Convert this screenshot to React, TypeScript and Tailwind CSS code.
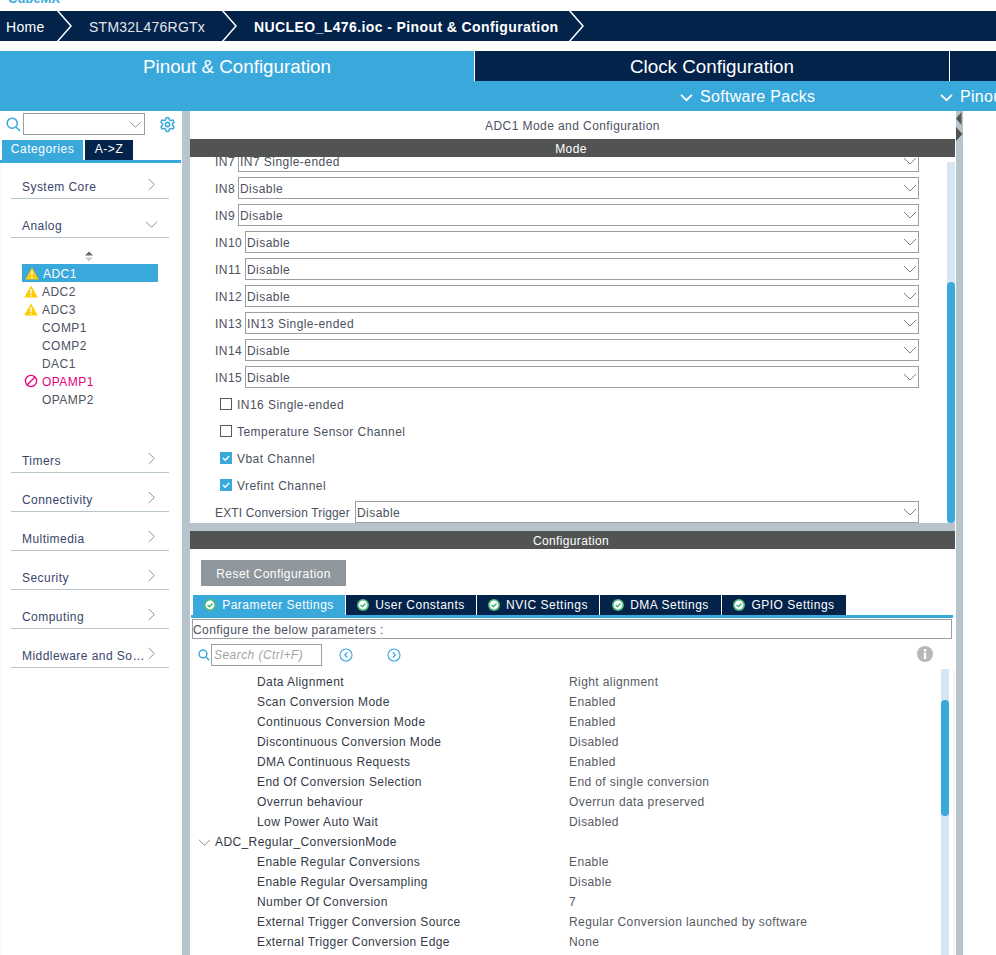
import React from "react";

const FONT = "font-['Liberation_Sans',Arial,sans-serif]";

function Chev({ dir = "down", className = "" }: { dir?: "down" | "right"; className?: string }) {
  return (
    <svg viewBox="0 0 14 14" className={className} fill="none" stroke="currentColor" strokeWidth="1">
      {dir === "down" ? <path d="M1 4l6 6 6-6" /> : <path d="M4 1l6 6-6 6" />}
    </svg>
  );
}

function Crumb({ w = 16 }: { w?: number }) {
  return (
    <svg viewBox="0 0 16 30" width={w} height={30} className="shrink-0" fill="none" stroke="#ffffff" strokeWidth="1.5">
      <path d="M1 -1L15 15L1 31" />
    </svg>
  );
}

function SideHead({ label, open = false }: { label: string; open?: boolean }) {
  return (
    <div className="ml-[11px] mr-[13px] mb-[16px] h-[23px] border-b border-[#b8c4cc] relative flex items-start pl-[11px] text-[12px] tracking-[0.45px] leading-[22px] text-[#39456a] whitespace-nowrap">
      <span>{label}</span>
      {open ? (
        <Chev className="absolute right-[11px] top-[3px] w-[13px] h-[13px] text-[#80888e]" />
      ) : (
        <Chev dir="right" className="absolute right-[11px] top-[2px] w-[13px] h-[13px] text-[#80888e]" />
      )}
    </div>
  );
}

function Warn() {
  return (
    <svg viewBox="0 0 14 13" className="w-[14px] h-[13px] shrink-0">
      <path d="M7 0.5L13.8 12.5H0.2Z" fill="#ffcb05" />
      <rect x="6.3" y="4" width="1.4" height="5" fill="#fff" />
      <rect x="6.3" y="10" width="1.4" height="1.4" fill="#fff" />
    </svg>
  );
}

function Ban() {
  return (
    <svg viewBox="0 0 14 14" className="w-[14px] h-[14px] shrink-0" fill="none" stroke="#e6007e" strokeWidth="1.3">
      <circle cx="7" cy="7" r="5.6" />
      <path d="M3 11L11 3" />
    </svg>
  );
}

function PeriphRow({ label, icon, active, pink }: { label: string; icon?: "w" | "b"; active?: boolean; pink?: boolean }) {
  return (
    <div className={`h-[18px] flex items-center text-[12px] tracking-[0.45px] ${active ? "bg-[#39a9dc] text-white pl-[3px]" : pink ? "text-[#e6007e] pl-[2px]" : "text-[#4c5160] pl-[2px]"}`}>
      <span className="w-[18px] flex items-center">{icon === "w" && <Warn />}{icon === "b" && <Ban />}</span>
      <span className="pt-[2px]">{label}</span>
    </div>
  );
}

function SelectRow({ label, value, boxLeft, tight }: { label: string; value: string; boxLeft: number; tight?: boolean }) {
  return (
    <div className="h-[27px] flex items-center pl-[25px] pr-[36px] text-[12px] tracking-[0.45px] text-[#4c5160]">
      <span className={`shrink-0 whitespace-nowrap pt-[2px] ${tight ? "tracking-[0.15px]" : ""}`} style={{ width: boxLeft - 215 }}>{label}</span>
      <div className="flex-1 h-[22px] border border-[#999fa3] flex items-center justify-between pl-[1px] pr-[1px]">
        <span className="pt-[2px]">{value}</span>
        <Chev className="w-[14px] h-[14px] text-[#7d8488]" />
      </div>
    </div>
  );
}

function CheckRow({ label, checked }: { label: string; checked?: boolean }) {
  return (
    <div className="h-[27px] flex items-center pl-[30px] gap-[5px] text-[12px] tracking-[0.45px] text-[#4c5160]">
      {checked ? (
        <span className="w-[12px] h-[12px] bg-[#39a9dc] flex items-center justify-center">
          <svg viewBox="0 0 12 12" className="w-[12px] h-[12px]" fill="none" stroke="#fff" strokeWidth="1.4"><path d="M3 6l2.2 2.2L9.2 4" /></svg>
        </span>
      ) : (
        <span className="w-[12px] h-[12px] border border-[#555a5e]" />
      )}
      <span className="pt-[2px]">{label}</span>
    </div>
  );
}

function TabIcon() {
  return (
    <svg viewBox="0 0 12 12" className="w-[12px] h-[12px] shrink-0">
      <circle cx="6" cy="6" r="6" fill="#4dbb7c" />
      <circle cx="6" cy="6" r="4.4" fill="#ffffff" />
      <path d="M3.6 6l1.8 1.8L8.5 4.6" fill="none" stroke="#3cb371" strokeWidth="1.4" />
    </svg>
  );
}

function CfgTab({ label, w, active }: { label: string; w: number; active?: boolean }) {
  return (
    <div style={{ width: w }} className={`h-[20px] flex items-center justify-center gap-[6px] text-white text-[12px] tracking-[0.5px] mr-[1px] ${active ? "bg-[#39a9dc]" : "bg-[#03234b]"}`}>
      <TabIcon />
      <span>{label}</span>
    </div>
  );
}

function Param({ k, v }: { k: string; v: string }) {
  return (
    <div className="h-[20px] flex items-center text-[12px] tracking-[0.4px]">
      <span className="w-[379px] pl-[67px] text-[#333a48]">{k}</span>
      <span className="text-[#55585f]">{v}</span>
    </div>
  );
}

export default function App() {
  const params1: [string, string][] = [
    ["Data Alignment", "Right alignment"],
    ["Scan Conversion Mode", "Enabled"],
    ["Continuous Conversion Mode", "Enabled"],
    ["Discontinuous Conversion Mode", "Disabled"],
    ["DMA Continuous Requests", "Enabled"],
    ["End Of Conversion Selection", "End of single conversion"],
    ["Overrun behaviour", "Overrun data preserved"],
    ["Low Power Auto Wait", "Disabled"],
  ];
  const params2: [string, string][] = [
    ["Enable Regular Conversions", "Enable"],
    ["Enable Regular Oversampling", "Disable"],
    ["Number Of Conversion", "7"],
    ["External Trigger Conversion Source", "Regular Conversion launched by software"],
    ["External Trigger Conversion Edge", "None"],
  ];
  return (
    <div className={`${FONT} w-[996px] h-[955px] overflow-hidden bg-white flex flex-col`}>
      {/* cut logo */}
      <div className="h-[11px] overflow-hidden relative">
        <span className="absolute left-[8px] top-[-9px] text-[13px] leading-[16px] font-bold text-[#39a9dc]">CubeMX</span>
      </div>

      {/* breadcrumb */}
      <div className="h-[30px] bg-[#03234b] flex items-center text-white text-[14px] leading-[20px] overflow-hidden">
        <span className="pl-[6px] pt-[2px] w-[56px] tracking-[0.3px]">Home</span>
        <Crumb />
        <span className="pl-[17px] pt-[2px] w-[149px] text-[#e2e6ec] tracking-[0.25px]">STM32L476RGTx</span>
        <Crumb />
        <span className="pl-[17px] pt-[2px] w-[331px] font-bold tracking-[0.4px] whitespace-nowrap">NUCLEO_L476.ioc - Pinout &amp; Configuration</span>
        <Crumb />
      </div>

      <div className="h-[10px]" />

      {/* main tabs */}
      <div className="h-[30px] flex text-[18.8px] text-white">
        <div className="w-[474px] pt-[2px] bg-[#39a9dc] flex items-center justify-center">Pinout &amp; Configuration</div>
        <div className="w-[1px]" />
        <div className="w-[474px] pt-[2px] bg-[#03234b] flex items-center justify-center">Clock Configuration</div>
        <div className="w-[1px]" />
        <div className="flex-1 bg-[#03234b]" />
      </div>
      <div className="h-[30px] pt-[2px] bg-[#39a9dc] relative flex items-center text-white text-[16px] tracking-[0.3px] whitespace-nowrap overflow-hidden">
        <div className="shrink-0 pl-[680px] w-[940px] flex items-center gap-[7px]">
          <svg viewBox="0 0 14 10" className="w-[13px] h-[9px]" fill="none" stroke="#fff" strokeWidth="2"><path d="M1 2l6 6 6-6" /></svg>
          <span>Software Packs</span>
        </div>
        <div className="shrink-0 flex items-center gap-[7px]">
          <svg viewBox="0 0 14 10" className="w-[13px] h-[9px]" fill="none" stroke="#fff" strokeWidth="2"><path d="M1 2l6 6 6-6" /></svg>
          <span>Pinout</span>
        </div>
      </div>

      {/* body */}
      <div className="flex-1 flex min-h-0">
        {/* sidebar */}
        <aside className="w-[182px] shrink-0 flex flex-col">
          <div className="h-[29px] flex items-center pb-[3px] pl-[6px]">
            <svg viewBox="0 0 16 16" className="w-[15px] h-[15px]" fill="none" stroke="#39a9dc" strokeWidth="1.6">
              <circle cx="6.6" cy="6.6" r="5.4" /><path d="M10.6 10.6L15 15" />
            </svg>
            <div className="ml-[2px] w-[122px] h-[22px] border border-[#999fa3] flex items-center justify-end pr-[2px]">
              <Chev className="w-[13px] h-[13px] text-[#7d8488]" />
            </div>
            <svg viewBox="0 0 24 24" className="ml-[14px] w-[17px] h-[17px]" fill="none" stroke="#39a9dc" strokeWidth="2.2" strokeLinecap="round" strokeLinejoin="round">
              <path d="M12.22 2h-.44a2 2 0 0 0-2 2v.18a2 2 0 0 1-1 1.73l-.43.25a2 2 0 0 1-2 0l-.15-.08a2 2 0 0 0-2.73.73l-.22.38a2 2 0 0 0 .73 2.73l.15.1a2 2 0 0 1 1 1.72v.51a2 2 0 0 1-1 1.74l-.15.09a2 2 0 0 0-.73 2.73l.22.38a2 2 0 0 0 2.73.73l.15-.08a2 2 0 0 1 2 0l.43.25a2 2 0 0 1 1 1.73V20a2 2 0 0 0 2 2h.44a2 2 0 0 0 2-2v-.18a2 2 0 0 1 1-1.73l.43-.25a2 2 0 0 1 2 0l.15.08a2 2 0 0 0 2.73-.73l.22-.39a2 2 0 0 0-.73-2.73l-.15-.08a2 2 0 0 1-1-1.74v-.5a2 2 0 0 1 1-1.74l.15-.09a2 2 0 0 0 .73-2.73l-.22-.38a2 2 0 0 0-2.73-.73l-.15.08a2 2 0 0 1-2 0l-.43-.25a2 2 0 0 1-1-1.73V4a2 2 0 0 0-2-2z" />
              <circle cx="12" cy="12" r="3" />
            </svg>
          </div>
          <div className="h-[20px] flex pl-[2px] gap-[2px] text-[12px] tracking-[0.55px] text-white">
            <div className="w-[81px] pb-[2px] bg-[#39a9dc] flex items-center justify-center">Categories</div>
            <div className="w-[48px] pb-[2px] bg-[#03234b] flex items-center justify-center">A-&gt;Z</div>
          </div>
          <div className="h-[3px] bg-[#39a9dc] mr-[1px]" />
          <div className="flex-1 pt-[13px] border-x-2 border-[#fafafa]">
            <div className="-mx-[2px]">
              <SideHead label="System Core" />
              <SideHead label="Analog" open />
              <div className="-mt-[3px] flex flex-col">
                <svg viewBox="0 0 10 11" className="ml-[84px] w-[10px] h-[11px] mb-[2px]">
                  <path d="M1 4.5L5 0.5L9 4.5Z" fill="#666" />
                  <path d="M1 6.5L5 10.5L9 6.5Z" fill="#ccc" />
                </svg>
                <div className="ml-[22px] w-[136px]">
                  <PeriphRow label="ADC1" icon="w" active />
                  <PeriphRow label="ADC2" icon="w" />
                  <PeriphRow label="ADC3" icon="w" />
                  <PeriphRow label="COMP1" />
                  <PeriphRow label="COMP2" />
                  <PeriphRow label="DAC1" />
                  <PeriphRow label="OPAMP1" icon="b" pink />
                  <PeriphRow label="OPAMP2" />
                </div>
              </div>
              <div className="h-[42px]" />
              <SideHead label="Timers" />
              <SideHead label="Connectivity" />
              <SideHead label="Multimedia" />
              <SideHead label="Security" />
              <SideHead label="Computing" />
              <SideHead label="Middleware and So…" />
            </div>
          </div>
        </aside>

        <div className="w-[8px] shrink-0 bg-[#b8c4cc]" />

        {/* main */}
        <main className="w-[765px] shrink-0 flex flex-col">
          <div className="h-[28px] pt-[1px] flex items-center justify-center text-[12px] tracking-[0.42px] text-[#4c5160]">ADC1 Mode and Configuration</div>
          <div className="h-[18px] pt-[1px] pr-[3px] bg-[#525453] flex items-center justify-center text-white text-[12px] tracking-[0.4px]">Mode</div>
          <div className="h-[366px] overflow-hidden relative">
            <div className="absolute right-0 top-[5px] bottom-0 w-[8px] bg-[#d7e6f3]" />
            <div className="absolute right-0 top-[125px] bottom-0 w-[8px] bg-[#39a9dc] rounded-full" />
            <div className="-mt-[9.5px]">
              <SelectRow label="IN7" value="IN7 Single-ended" boxLeft={238} />
              <SelectRow label="IN8" value="Disable" boxLeft={238} />
              <SelectRow label="IN9" value="Disable" boxLeft={238} />
              <SelectRow label="IN10" value="Disable" boxLeft={245} />
              <SelectRow label="IN11" value="Disable" boxLeft={245} />
              <SelectRow label="IN12" value="Disable" boxLeft={245} />
              <SelectRow label="IN13" value="IN13 Single-ended" boxLeft={245} />
              <SelectRow label="IN14" value="Disable" boxLeft={245} />
              <SelectRow label="IN15" value="Disable" boxLeft={245} />
              <CheckRow label="IN16 Single-ended" />
              <CheckRow label="Temperature Sensor Channel" />
              <CheckRow label="Vbat Channel" checked />
              <CheckRow label="Vrefint Channel" checked />
              <SelectRow label="EXTI Conversion Trigger" value="Disable" boxLeft={355} tight />
            </div>
          </div>
          <div className="h-[8px] bg-[#b8c4cc]" />
          <div className="h-[18px] pt-[1px] pr-[3px] bg-[#525453] flex items-center justify-center text-white text-[12px] tracking-[0.35px]">Configuration</div>
          <div className="pt-[11px] pl-[11px]">
            <button className="w-[145px] h-[26px] pt-[1px] bg-[#8f969c] text-white text-[12px] tracking-[0.45px]">Reset Configuration</button>
          </div>
          <div className="mt-[9px] pl-[3px] flex">
            <CfgTab label="Parameter Settings" w={152} active />
            <CfgTab label="User Constants" w={130} />
            <CfgTab label="NVIC Settings" w={122} />
            <CfgTab label="DMA Settings" w={121} />
            <CfgTab label="GPIO Settings" w={124} />
          </div>
          <div className="h-[3px] bg-[#39a9dc] ml-[1px] mr-[2px]" />
          <div className="ml-[2px] mr-[3px] mt-[1px] h-[20px] pt-[1px] border border-[#999fa3] flex items-center text-[12px] tracking-[0.42px] text-[#4c5160]">Configure the below parameters :</div>
          <div className="h-[30px] flex items-center pt-[1px] pl-[8px] relative">
            <svg viewBox="0 0 16 16" className="w-[12px] h-[12px]" fill="none" stroke="#39a9dc" strokeWidth="2">
              <circle cx="6.6" cy="6.6" r="5.2" /><path d="M10.6 10.6L15 15" />
            </svg>
            <div className="ml-[1px] w-[111px] h-[22px] border border-[#999fa3] flex items-center pl-[2px] text-[12px] italic tracking-[0.45px] text-[#a0a4a8]">Search (Ctrl+F)</div>
            <svg viewBox="0 0 14 14" className="ml-[17px] w-[14px] h-[14px]" fill="none" stroke="#39a9dc" strokeWidth="1.1">
              <circle cx="7" cy="7" r="6" /><path d="M8.3 4.5L5.8 7l2.5 2.5" />
            </svg>
            <svg viewBox="0 0 14 14" className="ml-[34px] w-[14px] h-[14px]" fill="none" stroke="#39a9dc" strokeWidth="1.1">
              <circle cx="7" cy="7" r="6" /><path d="M5.8 4.5L8.3 7l-2.5 2.5" />
            </svg>
            <svg viewBox="0 0 16 16" className="absolute left-[727px] top-[7px] w-[16px] h-[16px]">
              <circle cx="8" cy="8" r="8" fill="#b5b7b8" />
              <rect x="6.8" y="3" width="2.4" height="2.4" fill="#fff" />
              <rect x="6.8" y="6.6" width="2.4" height="6.4" fill="#fff" />
            </svg>
          </div>
          <div className="flex-1 relative overflow-hidden pt-[3px] border-r-2 border-[#f5f5f5]">
            <div className="absolute right-[4px] top-0 bottom-0 w-[8px] bg-[#d7e6f3]" />
            <div className="absolute right-[4px] top-[31px] h-[116px] w-[8px] bg-[#39a9dc] rounded-full" />
            {params1.map(([k, v]) => <Param key={k} k={k} v={v} />)}
            <div className="h-[20px] flex items-center text-[12px] tracking-[0.4px] text-[#2f3646] pl-[8px] gap-[4px]">
              <Chev className="w-[13px] h-[13px] text-[#80888e]" />
              <span>ADC_Regular_ConversionMode</span>
            </div>
            {params2.map(([k, v]) => <Param key={k} k={k} v={v} />)}
          </div>
        </main>

        {/* right splitter */}
        <div className="w-[1px] shrink-0" />
        <div className="w-[7px] shrink-0 bg-[#b8c4cc] flex flex-col">
          <svg viewBox="0 0 7 30" className="w-[7px] h-[30px] mt-[1px]">
            <path d="M5.5 0L0 6.5L5.5 13Z" fill="#525453" />
            <path d="M0 15L6.5 22L0 29Z" fill="#525453" />
          </svg>
        </div>
      </div>
    </div>
  );
}
